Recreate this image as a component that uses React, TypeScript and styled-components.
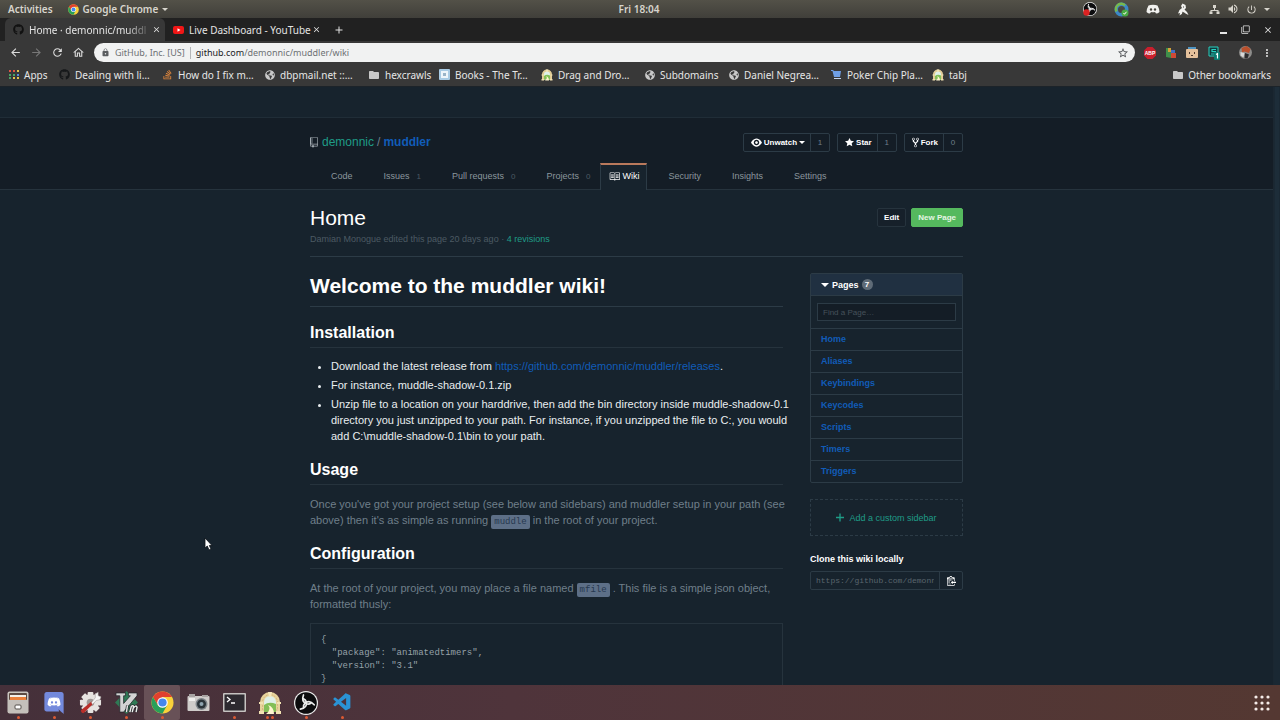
import React from "react";
import styled, { createGlobalStyle, css } from "styled-components";
import { FaGithub, FaStackOverflow, FaGlobeAmericas } from "react-icons/fa";
import {
  MdArrowBack,
  MdArrowForward,
  MdRefresh,
  MdOutlineHome,
  MdLock,
  MdStarBorder,
  MdFolder,
  MdMoreVert,
  MdClose,
  MdAdd,
  MdPowerSettingsNew,
  MdVolumeUp,
  MdFilterNone,
} from "react-icons/md";
import { VscVscode } from "react-icons/vsc";

const c = {
  page: "#17232d",
  header: "#141d26",
  line: "#26333d",
  rule: "#2c3b46",
  blue: "#115cb8",
  teal: "#1f9c87",
  muted: "#4c5a63",
  text: "#6f7f8a",
  light: "#e9eef0",
};

const uiFont = `"Noto Sans", "Open Sans", sans-serif`;
const pageFont = `"Liberation Sans", Arial, sans-serif`;
const monoFont = `"Liberation Mono", "Courier New", monospace`;

const GlobalStyle = createGlobalStyle`
  *, *::before, *::after { box-sizing: border-box; }
  body { margin: 0; background: ${c.page}; }
  button, input { font: inherit; color: inherit; }
  button { border: 0; padding: 0; background: none; }
  a { text-decoration: none; color: inherit; }
  ul, h1, h2, h3, p, pre { margin: 0; padding: 0; }
  svg { display: block; flex: none; }
`;

/* ---------- desktop shell ---------- */

const Desktop = styled.div`
  display: flex;
  flex-direction: column;
  height: 100vh;
  font-family: ${uiFont};
  overflow: hidden;
`;

const TopBar = styled.header`
  display: grid;
  grid-template-columns: 1fr auto 1fr;
  align-items: center;
  height: 18px;
  flex: none;
  padding: 0 10px 0 8px;
  background: linear-gradient(#535148, #403f3a);
  color: #d8d5cd;
  font-size: 10px;
  line-height: 18px;
  font-weight: 600;
`;

const TopGroup = styled.div<{ $end?: boolean; $gap: number }>`
  display: flex;
  align-items: center;
  gap: ${(p) => p.$gap}px;
  justify-content: ${(p) => (p.$end ? "flex-end" : "flex-start")};
`;

const TopButton = styled.button`
  display: flex;
  align-items: center;
  gap: 4px;
`;

const Caret = styled.span<{ $size?: number }>`
  border: ${(p) => p.$size ?? 3}px solid transparent;
  border-top-color: currentColor;
  border-bottom: 0;
`;

/* ---------- browser chrome ---------- */

const TabStrip = styled.div`
  display: flex;
  align-items: center;
  height: 23px;
  flex: none;
  padding: 0 7px 0 5px;
  background: #212121;
  color: #e4e4e4;
  font-size: 10px;
`;

const Tab = styled.div<{ $active?: boolean }>`
  display: flex;
  align-items: center;
  align-self: stretch;
  width: 160px;
  padding: 0 4px 0 8px;
  border-radius: 6px 6px 0 0;
  background: ${(p) => (p.$active ? "#383838" : "transparent")};
`;

const TabTitle = styled.span<{ $fade?: boolean }>`
  flex: 1;
  min-width: 0;
  padding-left: 5px;
  white-space: nowrap;
  ${(p) =>
    p.$fade &&
    css`
      mask-image: linear-gradient(90deg, #000 80%, transparent);
    `}
`;

const IconButton = styled.button`
  display: grid;
  place-items: center;
`;

const NewTab = styled(IconButton)`
  margin-left: 8px;
`;

const WindowButtons = styled.div`
  display: flex;
  align-items: center;
  gap: 13px;
  margin-left: auto;
`;

const Toolbar = styled.div`
  display: flex;
  align-items: center;
  gap: 8px;
  height: 23px;
  flex: none;
  padding: 0 7px 0 9px;
  background: #383838;
  color: #dcdcdc;
`;

const Address = styled.div`
  display: flex;
  align-items: center;
  flex: 1;
  height: 19px;
  margin-left: 1px;
  padding: 0 6px 0 7px;
  border-radius: 10px;
  background: #f1f2f2;
  color: #6d7174;
  font-size: 9px;
  line-height: 19px;
  white-space: nowrap;
`;

const SiteName = styled.span`
  margin: 0 5px;
  padding-right: 5px;
  border-right: 1px solid #b4b6b8;
  line-height: 12px;
`;

const Url = styled.span`
  flex: 1;
  b {
    font-weight: 400;
    color: #202124;
  }
`;

const Extensions = styled.div`
  display: flex;
  align-items: center;
  gap: 9px;
  margin-left: 1px;
`;

const Bookmarks = styled.nav`
  display: flex;
  height: 23px;
  flex: none;
  align-items: center;
  padding: 0 9px 1px 8px;
  border-bottom: 1px solid #1c2329;
  background: #383838;
  color: #e6e6e6;
  font-size: 10px;
`;

const Bookmark = styled.a<{ $width: number }>`
  display: flex;
  align-items: center;
  gap: 5px;
  width: ${(p) => p.$width}px;
  flex: none;
  white-space: nowrap;
`;

const OtherBookmarks = styled.a`
  display: flex;
  align-items: center;
  gap: 4px;
  margin-left: auto;
  white-space: nowrap;
`;

/* ---------- page ---------- */

const Viewport = styled.div`
  display: flex;
  flex: 1;
  min-height: 0;
  overflow: hidden;
  background: ${c.page};
  font-family: ${pageFont};
  color: ${c.text};
`;

const Page = styled.div`
  flex: 1;
  min-width: 0;
`;

const ScrollTrack = styled.div`
  width: 7px;
  background: #1a2833;
  border-left: 1px solid #1b2731;
`;

const Thumb = styled.div`
  height: 303px;
  margin: 0 1px;
  background: #1d2d39;
`;

const SiteBanner = styled.div`
  height: 31px;
  border-bottom: 1px solid #202d37;
`;

const Container = styled.div`
  width: 100%;
  max-width: 653px;
  margin: 0 auto;
`;

const RepoHead = styled.header`
  padding-top: 15px;
  border-bottom: 1px solid ${c.line};
  background: ${c.header};
`;

const RepoRow = styled.div`
  display: flex;
  align-items: center;
  justify-content: space-between;
  height: 19px;
`;

const RepoTitle = styled.h1`
  display: flex;
  align-items: center;
  gap: 3px;
  font-size: 12px;
  line-height: 19px;
  font-weight: 400;
  svg {
    margin-right: 1px;
  }
  a {
    color: ${c.teal};
  }
  a:last-child {
    color: ${c.blue};
    font-weight: 700;
  }
`;

const RepoActions = styled.div`
  display: flex;
  gap: 7px;
`;

const Social = styled.div`
  display: flex;
  height: 19px;
  border: 1px solid ${c.rule};
  border-radius: 2px;
  font-size: 8px;
  line-height: 17px;
`;

const SocialButton = styled.button`
  display: flex;
  align-items: center;
  gap: 2px;
  padding: 0 5px 0 7px;
  color: #fff;
  font-weight: 700;
`;

const SocialCount = styled.a`
  width: 19px;
  text-align: center;
  border-left: 1px solid ${c.rule};
  color: ${c.text};
`;

const RepoNav = styled.nav`
  display: flex;
  margin: 11px 0 -1px;
  font-size: 9px;
`;

const NavItem = styled.a<{ $active?: boolean }>`
  display: flex;
  align-items: center;
  height: 27px;
  padding: 0 10px 1px 21px;
  color: #8b969d;
  white-space: nowrap;
  ${(p) =>
    p.$active &&
    css`
      gap: 2px;
      padding: 0 7px 3px 8px;
      border: 1px solid ${c.rule};
      border-top: 2px solid #b9795c;
      border-bottom: 0;
      background: ${c.page};
      color: #fff;
    `}
`;

const Counter = styled.span`
  margin-left: 7px;
  color: ${c.muted};
  font-size: 8px;
`;

const Content = styled.main`
  padding-top: 18px;
`;

const TitleRow = styled.div`
  display: flex;
  align-items: center;
  gap: 5px;
  height: 19px;
`;

const PageTitle = styled.h1`
  flex: 1;
  color: #fff;
  font-size: 21px;
  line-height: 19px;
  font-weight: 400;
`;

const Button = styled.button<{ $primary?: boolean }>`
  height: 19px;
  padding: 0 6px;
  border: 1px solid ${(p) => (p.$primary ? "#55b95e" : c.line)};
  border-radius: 2px;
  background: ${(p) => (p.$primary ? "#55b95e" : "#16202a")};
  color: ${(p) => (p.$primary ? "#e4f5e4" : "#fff")};
  font-size: 8px;
  line-height: 17px;
  font-weight: 700;
`;

const Meta = styled.p`
  margin-top: 4px;
  padding-bottom: 9px;
  border-bottom: 1px solid ${c.rule};
  color: ${c.muted};
  font-size: 9px;
  line-height: 16px;
  a {
    color: ${c.teal};
  }
`;

const Columns = styled.div`
  display: grid;
  grid-template-columns: minmax(0, 1fr) 153px;
  gap: 27px;
  align-items: start;
  margin-top: 16px;
`;

const Article = styled.article`
  font-size: 11px;
  line-height: 16px;
  white-space: nowrap;
`;

const H1 = styled.h1`
  padding-bottom: 7px;
  border-bottom: 1px solid ${c.rule};
  color: #fff;
  font-size: 21px;
  line-height: 26px;
`;

const H2 = styled.h2`
  margin-top: 16px;
  padding-bottom: 4px;
  border-bottom: 1px solid ${c.line};
  color: #fff;
  font-size: 16px;
  line-height: 20px;
`;

const Steps = styled.ul`
  display: grid;
  gap: 3px;
  margin-top: 10px;
  padding-left: 21px;
  color: ${c.light};
  a {
    color: ${c.blue};
  }
`;

const Para = styled.p`
  margin-top: 11px;
`;

const Code = styled.code`
  padding: 2px 3px;
  border-radius: 2px;
  background: #5d6f87;
  color: #26384f;
  font-family: ${monoFont};
  font-size: 9px;
  line-height: 10px;
`;

const Pre = styled.pre`
  margin-top: 11px;
  padding: 10px;
  border: 1px solid ${c.line};
  color: #96a1a8;
  font-family: ${monoFont};
  font-size: 9px;
  line-height: 13px;
`;

const PagesBox = styled.section`
  border: 1px solid ${c.rule};
  border-radius: 2px;
  color: ${c.blue};
  font-size: 9px;
  font-weight: 700;
`;

const PagesHead = styled.h3`
  display: flex;
  align-items: center;
  gap: 3px;
  height: 21px;
  padding: 0 10px;
  background: #203041;
  color: #fff;
  font-size: 9px;
`;

const CountBadge = styled.span`
  width: 11px;
  border-radius: 6px;
  background: #5f6b77;
  font-size: 8px;
  line-height: 11px;
  text-align: center;
`;

const FilterRow = styled.div`
  padding: 7px 6px;
  border-top: 1px solid ${c.rule};
`;

const FilterInput = styled.input`
  display: block;
  width: 100%;
  height: 18px;
  padding: 0 5px;
  border: 1px solid ${c.rule};
  background: #141d26;
  font-size: 8px;
  font-weight: 400;
  &::placeholder {
    color: #46515a;
    opacity: 1;
  }
`;

const PageList = styled.ul`
  list-style: none;
`;

const PageItem = styled.li`
  height: 22px;
  padding: 0 10px;
  border-top: 1px solid ${c.rule};
  line-height: 21px;
`;

const AddSidebar = styled.a`
  display: flex;
  align-items: center;
  justify-content: center;
  gap: 5px;
  height: 37px;
  margin-top: 16px;
  border: 1px dashed ${c.rule};
  color: ${c.teal};
  font-size: 9px;
`;

const CloneLabel = styled.label`
  display: block;
  margin: 15px 0 4px;
  color: #fff;
  font-size: 9px;
  line-height: 16px;
  font-weight: 700;
`;

const CloneRow = styled.div`
  display: flex;
  height: 19px;
  border: 1px solid ${c.rule};
  border-radius: 2px;
`;

const CloneInput = styled.input`
  flex: 1;
  min-width: 0;
  padding: 0;
  border: 0;
  border-left: 5px solid transparent;
  border-right: 5px solid transparent;
  background: transparent;
  color: #5b666e;
  font-family: ${monoFont};
  font-size: 8px;
`;

const CopyButton = styled.button`
  display: grid;
  place-items: center;
  width: 23px;
  border-left: 1px solid ${c.rule};
  color: #fff;
`;

/* ---------- dock ---------- */

const Dock = styled.footer`
  display: flex;
  align-items: stretch;
  justify-content: space-between;
  height: 35px;
  flex: none;
  padding-right: 10px;
  background: linear-gradient(90deg, #45303a, #4f343b 40%, #543832);
`;

const DockApps = styled.div`
  display: flex;
`;

const DockButton = styled.button<{ $active?: boolean }>`
  position: relative;
  display: grid;
  place-items: center;
  width: 36px;
  border-radius: 2px;
  background: ${(p) => (p.$active ? "#685157" : "transparent")};
`;

const Running = styled.span`
  position: absolute;
  left: 0;
  right: 0;
  bottom: 1px;
  display: flex;
  justify-content: center;
  gap: 2px;
  i {
    width: 3px;
    height: 3px;
    border-radius: 2px;
    background: #dd5a33;
  }
`;

const Pointer = styled.svg`
  position: absolute;
  left: 204px;
  top: 537px;
`;

/* ---------- drawings ---------- */

const oct = {
  repo: [12, "M4 9H3V8h1v1zm0-3H3v1h1V6zm0-2H3v1h1V4zm0-2H3v1h1V2zm8-1v12c0 .55-.45 1-1 1H6v2l-1.5-1.5L3 16v-2H1c-.55 0-1-.45-1-1V1c0-.55.45-1 1-1h10c.55 0 1 .45 1 1zm-1 10H1v2h2v-1h3v1h5v-2zm0-10H2v9h9V1z"],
  eye: [16, "M8.06 2C3 2 0 8 0 8s3 6 8.06 6C13 14 16 8 16 8s-3-6-7.94-6zM8 12c-2.2 0-4-1.78-4-4 0-2.2 1.8-4 4-4 2.22 0 4 1.8 4 4 0 2.22-1.78 4-4 4zm2-4c0 1.11-.89 2-2 2-1.11 0-2-.89-2-2 0-1.11.89-2 2-2 1.11 0 2 .89 2 2z"],
  star: [14, "M14 6l-4.9-.64L7 1 4.9 5.36 0 6l3.6 3.26L2.67 14 7 11.67 11.33 14l-.93-4.74L14 6z"],
  fork: [10, "M8 1a1.993 1.993 0 0 0-1 3.72V6L5 8 3 6V4.72A1.993 1.993 0 0 0 2 1a1.993 1.993 0 0 0-1 3.72V6.5l3 3v1.78A1.993 1.993 0 0 0 5 15a1.993 1.993 0 0 0 1-3.72V9.5l3-3V4.72A1.993 1.993 0 0 0 8 1zM2 4.2C1.34 4.2.8 3.65.8 3c0-.65.55-1.2 1.2-1.2.65 0 1.2.55 1.2 1.2 0 .65-.55 1.2-1.2 1.2zm3 10c-.66 0-1.2-.55-1.2-1.2 0-.65.55-1.2 1.2-1.2.65 0 1.2.55 1.2 1.2 0 .65-.55 1.2-1.2 1.2zm3-10c-.66 0-1.2-.55-1.2-1.2 0-.65.55-1.2 1.2-1.2.65 0 1.2.55 1.2 1.2 0 .65-.55 1.2-1.2 1.2z"],
  book: [16, "M3 5h4v1H3V5zm0 3h4V7H3v1zm0 2h4V9H3v1zm11-5h-4v1h4V5zm0 2h-4v1h4V7zm0 2h-4v1h4V9zm2-6v9c0 .55-.45 1-1 1H9.5l-1 1-1-1H2c-.55 0-1-.45-1-1V3c0-.55.45-1 1-1h5.5l1 1 1-1H15c.55 0 1 .45 1 1zm-8 .5L7.5 3H2v9h6V3.5zm7-.5H9.5l-.5.5V12h6V3z"],
  plus: [12, "M12 9H7v5H5V9H0V7h5V2h2v5h5v2z"],
  clippy: [14, "M2 13h4v1H2v-1zm5-6H2v1h5V7zm2 3V8l-3 3 3 3v-2h5v-2H9zM4.5 9H2v1h2.5V9zM2 12h2.5v-1H2v1zm9 1h1v2c-.02.28-.11.52-.3.7-.19.18-.42.28-.7.3H1c-.55 0-1-.45-1-1V4c0-.55.45-1 1-1h3c0-1.11.89-2 2-2 1.11 0 2 .89 2 2h3c.55 0 1 .45 1 1v5h-1V6H1v9h10v-2zM2 5h8c0-.55-.45-1-1-1H8c-.55 0-1-.45-1-1s-.45-1-1-1-1 .45-1 1-.45 1-1 1H3c-.55 0-1 .45-1 1z"],
} as const;

const Octicon = ({ name, width, height, fill = "currentColor" }: { name: keyof typeof oct; width: number; height: number; fill?: string }) => (
  <svg width={width} height={height} viewBox={`0 0 ${oct[name][0]} 16`} fill={fill} aria-hidden="true">
    <path d={oct[name][1]} />
  </svg>
);

const ChromeLogo = ({ size }: { size: number }) => (
  <svg width={size} height={size} viewBox="0 0 48 48" aria-hidden="true">
    <circle cx="24" cy="24" r="23" fill="#f9d13a" />
    <path d="M4.1 12.5A23 23 0 0 1 43.9 12.5H24L14.5 29.5z" fill="#e0402f" />
    <path d="M4.1 12.5A23 23 0 0 0 24 47L33.5 29.5 24 34 14.5 29.5z" fill="#28a05a" />
    <circle cx="24" cy="24" r="11" fill="#fff" />
    <circle cx="24" cy="24" r="8.6" fill="#4587ec" />
  </svg>
);

const YouTube = () => (
  <svg width="11" height="8" viewBox="0 0 22 16" aria-hidden="true">
    <rect width="22" height="16" rx="4" fill="#f01616" />
    <path d="M9 4.5v7l6-3.5z" fill="#fff" />
  </svg>
);

const AppsGrid = () => (
  <svg width="11" height="11" viewBox="0 0 11 11" aria-hidden="true">
    {["#e25544", "#e25544", "#e4c34c", "#49a566", "#49a566", "#5a8bd8", "#49a566", "#e4c34c", "#e4c34c"].map((f, i) => (
      <rect key={i} x={1 + (i % 3) * 4} y={1 + Math.floor(i / 3) * 4 - (i > 5 ? 1 : 0)} width="2" height="2" fill={f} />
    ))}
  </svg>
);

const Arch = ({ size }: { size: number }) => (
  <svg width={size} height={size} viewBox="0 0 24 24" aria-hidden="true">
    <path d="M2 21V11a10 10 0 0 1 20 0v10z" fill="#e7d39c" />
    <path d="M4.6 19v-8a7.4 7.4 0 0 1 14.8 0v8z" fill="none" stroke="#c4a468" strokeWidth="0.6" strokeDasharray="2 1" />
    <path d="M6 21V11a6 6 0 0 1 12 0v10z" fill="#dff0e8" />
    <path d="M6 21v-7q5-4 12-1v8z" fill="#83bf57" />
    <path d="M8 23q6-5 2-9 6 2 6 9z" fill="#fff6cf" />
    <path d="M1 20h5v3H1zM18 20h5v3h-5zM1 11h4v2H1zM19 11h4v2h-4z" fill="#f2e2b2" />
    <path d="M10 1h4l-1 5h-2z" fill="#f5e8bd" />
  </svg>
);

const Frame = () => (
  <svg width="11" height="11" viewBox="0 0 11 11" aria-hidden="true">
    <rect width="11" height="11" rx="1" fill="#a9cbe4" />
    <rect x="2" y="2" width="7" height="7" fill="#eef5fa" />
    <rect x="4" y="4" width="3" height="3" fill="#9ab4c8" />
  </svg>
);

const Cart = () => (
  <svg width="11" height="11" viewBox="0 0 11 11" aria-hidden="true">
    <path d="M0 1h2l1 1h7l-1 6H3L1.500 2H0z" fill="#6f9fe6" />
    <path d="M3 9h7v1H3z" fill="#c3d4ee" />
  </svg>
);

const DISCORD =
  "M297.216 243.2c0 15.616-11.52 28.416-26.112 28.416-14.336 0-26.112-12.8-26.112-28.416s11.52-28.416 26.112-28.416c14.592 0 26.112 12.8 26.112 28.416zm-119.552-28.416c-14.592 0-26.112 12.8-26.112 28.416s11.776 28.416 26.112 28.416c14.592 0 26.112-12.8 26.112-28.416.256-15.616-11.52-28.416-26.112-28.416zM448 52.736V512c-64.494-56.994-43.868-38.128-118.784-107.776l13.568 47.36H52.48C23.552 451.584 0 428.032 0 398.848V52.736C0 23.552 23.552 0 52.48 0h343.04C424.448 0 448 23.552 448 52.736zm-72.96 242.688c0-82.432-36.864-149.248-36.864-149.248-36.864-27.648-71.936-26.88-71.936-26.88l-3.584 4.096c43.52 13.312 63.744 32.512 63.744 32.512-60.811-33.329-132.244-33.335-191.232-7.424-9.472 4.352-15.104 7.424-15.104 7.424s21.248-20.224 67.328-33.536l-2.56-3.072s-35.072-.768-71.936 26.88c0 0-36.864 66.816-36.864 149.248 0 0 21.504 37.12 78.08 38.912 0 0 9.472-11.52 17.152-21.248-32.512-9.728-44.8-30.208-44.8-30.208 3.766 2.636 9.976 6.053 10.496 6.4 43.21 24.198 104.588 32.126 159.744 8.96 8.96-3.328 18.944-8.192 29.44-15.104 0 0-12.8 20.992-46.336 30.464 7.68 9.728 16.896 20.736 16.896 20.736 56.576-1.792 78.336-38.912 78.336-38.912z";

const DiscordApp = () => (
  <svg width="20" height="22" viewBox="0 0 448 512" aria-hidden="true">
    <rect x="60" y="90" width="330" height="260" fill="#fff" />
    <path d={DISCORD} fill="#7389dc" />
  </svg>
);

const DiscordTray = () => (
  <svg width="14" height="12" viewBox="0 0 28 24" aria-hidden="true">
    <path d="M9 4q5-1.500 10 0l4 1q4 7 4 13-3 3-7 3l-2-3q-4 1-8 0l-2 3q-4 0-7-3 0-6 4-13z" fill="#f1f1ee" />
    <ellipse cx="10" cy="13" rx="2.300" ry="2.600" fill="#48463f" />
    <ellipse cx="18" cy="13" rx="2.300" ry="2.600" fill="#48463f" />
  </svg>
);

const ObsLogo = ({ size, recording }: { size: number; recording?: boolean }) => (
  <svg width={size} height={size} viewBox="0 0 24 24" aria-hidden="true">
    <circle cx="12" cy="12" r="12" fill="#ececec" />
    <circle cx="12" cy="12" r="10.800" fill="#0c0c0e" />
    <g fill="none" stroke="#ececec" strokeWidth="1.700" strokeLinecap="round">
      {[0, 120, 240].map((a) => (
        <path key={a} d="M9.500 4Q7 10.500 12.500 12.800Q15 13.500 17 12" transform={`rotate(${a} 12 12)`} />
      ))}
    </g>
    {recording && <circle cx="6" cy="18" r="5.500" fill="#dc2222" />}
  </svg>
);

const SyncTray = () => (
  <svg width="15" height="15" viewBox="0 0 30 30" aria-hidden="true">
    <circle cx="15" cy="15" r="10.500" fill="none" stroke="#3b88c8" strokeWidth="7" />
    <path d="M22 7A10.500 10.500 0 0 0 5 19" fill="none" stroke="#79b94b" strokeWidth="5" />
    <circle cx="22" cy="22" r="7" fill="#48a942" />
    <path d="M19 22l2 2.500 4-5" fill="none" stroke="#fff" strokeWidth="2" />
  </svg>
);

const SquirrelTray = () => (
  <svg width="12" height="13" viewBox="0 0 24 26" aria-hidden="true">
    <path d="M11 1l6 3 1 6-3 3 5 5 3 6-6-3-4-3-2 3-6 4 1-5-4 1 3-7 5-4-2-4z" fill="#f1f1ee" />
    <path d="M12 7h2v2h-2zM11 17l4 5h-5z" fill="#48463f" />
  </svg>
);

const NetworkTray = () => (
  <svg width="11" height="11" viewBox="0 0 22 22" fill="#d8d5cd" aria-hidden="true">
    <path d="M8 2h6v6h-2v4h7v3h2v5h-6v-5h2v-1H5v1h2v5H1v-5h2v-3h7V8H8z" />
  </svg>
);

const Abp = () => (
  <svg width="12" height="12" viewBox="0 0 24 24" aria-hidden="true">
    <path d="M7 0h10l7 7v10l-7 7H7l-7-7V7z" fill="#c91f2d" />
    <text x="12" y="15.500" fontSize="10" fontWeight="700" textAnchor="middle" fill="#fff" fontFamily="Liberation Sans, sans-serif">
      ABP
    </text>
  </svg>
);

const Blocks = () => (
  <svg width="12" height="12" viewBox="0 0 12 12" aria-hidden="true">
    <path d="M1 1h5v10l-5-1z" fill="#3f8f4a" />
    <path d="M3 1h3v4H3z" fill="#d3a13a" />
    <path d="M6 3h4v4H6z" fill="#3f6fc4" />
    <path d="M6 6h5v5H6z" fill="#cf4a35" />
  </svg>
);

const Face = () => (
  <svg width="12" height="12" viewBox="0 0 12 12" aria-hidden="true">
    <path d="M2 0h8v4H2z" fill="#4f94c2" />
    <rect y="2" width="12" height="9" rx="1" fill="#e5c19c" />
    <path d="M3 5h1v2H3zM8 5h1v2H8zM5 8h2v1H5z" fill="#4f3a30" />
  </svg>
);

const Stylus = () => (
  <svg width="14" height="14" viewBox="0 0 14 14" aria-hidden="true">
    <path d="M2 1h9v9H2V4z" fill="#12383a" stroke="#27d0c0" />
    <path d="M9 3.500H5v2.200h3.500v2.300H4" fill="none" stroke="#27d0c0" strokeWidth="1.200" />
    <rect x="7" y="6" width="6" height="8" rx="1" fill="#0a7a70" />
    <path d="M9 8.500l1.500-1v5" fill="none" stroke="#fff" strokeWidth="1.200" />
  </svg>
);

const Avatar = () => (
  <svg width="13" height="13" viewBox="0 0 26 26" aria-hidden="true">
    <circle cx="13" cy="13" r="13" fill="#8d8c8a" />
    <path d="M5 4l10-4 8 6-3 8-9-3-5 2z" fill="#b9502d" />
    <path d="M3 12l8 2-2 9-6-4z" fill="#d8d8d8" />
    <path d="M12 14l8 3-3 8h-6z" fill="#2c2b2d" />
  </svg>
);

const MinimizeGlyph = () => (
  <svg width="8" height="8" viewBox="0 0 8 8" fill="currentColor" aria-hidden="true">
    <rect y="6" width="7" height="2" />
  </svg>
);

const FilesApp = () => (
  <svg width="22" height="23" viewBox="0 0 22 23" aria-hidden="true">
    <rect x="0.500" y="0.500" width="21" height="22" rx="2" fill="#c9c5bf" />
    <rect x="2" y="2" width="18" height="7" rx="1" fill="#5c4a42" />
    <path d="M3 4h16v2H3z" fill="#f3efe8" />
    <path d="M3 6h16v3H3z" fill="#e9803b" />
    <rect x="1" y="9" width="20" height="13" rx="1" fill="#c4c0bb" />
    <rect x="8" y="14" width="6" height="4" rx="1" fill="#fff" stroke="#55504c" />
  </svg>
);

const SettingsApp = () => (
  <svg width="23" height="23" viewBox="0 0 24 24" aria-hidden="true">
    <g fill="#e6e3e0">
      {[0, 45, 90, 135].map((a) => (
        <rect key={a} x="9" y="1" width="6" height="22" rx="1" transform={`rotate(${a} 12 12)`} />
      ))}
      <circle cx="12" cy="12" r="8.500" />
    </g>
    <circle cx="12" cy="12" r="4" fill="#9d9895" />
    <path d="M2 20l11-9 2 2-10 10q-3 0-3-3z" fill="#b92f2a" />
    <path d="M13 12l4-5V3l3-2v4l3 1-1 3-4 1-4 4z" fill="#f5f5f5" stroke="#98908d" strokeWidth="0.500" />
  </svg>
);

const VimApp = () => (
  <svg width="23" height="23" viewBox="0 0 24 24" aria-hidden="true">
    <path d="M12 0l12 12-12 12L0 12z" fill="#2f7a55" />
    <path d="M1 2h10v3H9v8l7-8h-2V2h9v3L9 22H5V5H1z" fill="#d4d4d4" stroke="#22262a" strokeWidth="0.800" />
    <path d="M13 15l-1 7M15.500 22l1.500-6q3-2 2 2l-1 4 1-4q3-4 4-1l-1 5" fill="none" stroke="#24282b" strokeWidth="3" />
    <path d="M13 15l-1 7M15.500 22l1.500-6q3-2 2 2l-1 4 1-4q3-4 4-1l-1 5" fill="none" stroke="#ececec" strokeWidth="1.500" />
  </svg>
);

const CameraApp = () => (
  <svg width="23" height="18" viewBox="0 0 23 18" aria-hidden="true">
    <rect x="0.500" y="2" width="22" height="15" rx="1" fill="#cfccca" />
    <path d="M2 0h6v3H2zM15 1h6v2h-6z" fill="#a8a4a3" />
    <rect x="2" y="4" width="6" height="3" fill="#efeeec" />
    <circle cx="14.500" cy="10" r="6" fill="#7e8489" />
    <circle cx="14.500" cy="10" r="4.500" fill="#2b3339" />
    <circle cx="14.500" cy="10" r="2" fill="#8fa4b0" />
  </svg>
);

const TerminalApp = () => (
  <svg width="23" height="19" viewBox="0 0 23 19" aria-hidden="true">
    <rect width="23" height="19" rx="1" fill="#c6c3c1" />
    <rect x="1.500" y="1.500" width="20" height="16" fill="#2d2a30" />
    <path d="M4 4l3 2.500L4 9M8 10h4" fill="none" stroke="#fff" strokeWidth="1.300" />
  </svg>
);

const DotsGrid = () => (
  <svg width="16" height="16" viewBox="0 0 16 16" fill="#f5ebe8" aria-hidden="true">
    {[2, 8, 14].map((y) => [2, 8, 14].map((x) => <circle key={`${x}-${y}`} cx={x} cy={y} r="1.600" />))}
  </svg>
);

/* ---------- data ---------- */

const globe = <FaGlobeAmericas size={10} color="#c9c9c9" />;
const bookmarks: { icon: React.ReactNode; label: string; width: number }[] = [
  { icon: <AppsGrid />, label: "Apps", width: 51 },
  { icon: <FaGithub size={11} color="#16181a" />, label: "Dealing with li…", width: 103 },
  { icon: <FaStackOverflow size={11} color="#e0863c" />, label: "How do I fix m…", width: 103 },
  { icon: globe, label: "dbpmail.net ::…", width: 103 },
  { icon: <MdFolder size={12} color="#c9c9c9" />, label: "hexcrawls", width: 71 },
  { icon: <Frame />, label: "Books - The Tr…", width: 102 },
  { icon: <Arch size={12} />, label: "Drag and Dro…", width: 104 },
  { icon: globe, label: "Subdomains", width: 84 },
  { icon: globe, label: "Daniel Negrea…", width: 102 },
  { icon: <Cart />, label: "Poker Chip Pla…", width: 101 },
  { icon: <Arch size={12} />, label: "tabj", width: 40 },
];

const navItems: { label: string; count?: number; active?: boolean }[] = [
  { label: "Code" },
  { label: "Issues", count: 1 },
  { label: "Pull requests", count: 0 },
  { label: "Projects", count: 0 },
  { label: "Wiki", active: true },
  { label: "Security" },
  { label: "Insights" },
  { label: "Settings" },
];

const wikiPages = ["Home", "Aliases", "Keybindings", "Keycodes", "Scripts", "Timers", "Triggers"];

const dockApps: { name: string; icon: React.ReactNode; running: number; active?: boolean }[] = [
  { name: "Files", icon: <FilesApp />, running: 1 },
  { name: "Discord", icon: <DiscordApp />, running: 1 },
  { name: "Settings", icon: <SettingsApp />, running: 1 },
  { name: "Vim", icon: <VimApp />, running: 1 },
  { name: "Chrome", icon: <ChromeLogo size={23} />, running: 1, active: true },
  { name: "Camera", icon: <CameraApp />, running: 0 },
  { name: "Terminal", icon: <TerminalApp />, running: 1 },
  { name: "Mudlet", icon: <Arch size={24} />, running: 2 },
  { name: "OBS", icon: <ObsLogo size={24} />, running: 1 },
  { name: "Code", icon: <VscVscode size={21} color="#2a93d5" />, running: 1 },
];

/* ---------- app ---------- */

export default function App() {
  return (
    <Desktop>
      <GlobalStyle />
      <TopBar>
        <TopGroup $gap={15}>
          <TopButton>Activities</TopButton>
          <TopButton>
            <ChromeLogo size={11} />
            Google Chrome
            <Caret />
          </TopButton>
        </TopGroup>
        <span>Fri 18:04</span>
        <TopGroup $end $gap={13}>
          <TopGroup $gap={17}>
            <ObsLogo size={14} recording />
            <SyncTray />
            <DiscordTray />
            <SquirrelTray />
          </TopGroup>
          <TopGroup $gap={7}>
            <span />
            <NetworkTray />
            <MdVolumeUp size={12} />
            <MdPowerSettingsNew size={11} />
            <Caret />
          </TopGroup>
        </TopGroup>
      </TopBar>

      <TabStrip>
        <Tab $active>
          <FaGithub size={11} color="#111" />
          <TabTitle $fade>Home · demonnic/muddl</TabTitle>
          <IconButton aria-label="Close tab">
            <MdClose size={9} />
          </IconButton>
        </Tab>
        <Tab>
          <YouTube />
          <TabTitle>Live Dashboard - YouTube</TabTitle>
          <IconButton aria-label="Close tab">
            <MdClose size={9} />
          </IconButton>
        </Tab>
        <NewTab aria-label="New tab">
          <MdAdd size={12} />
        </NewTab>
        <WindowButtons>
          <IconButton aria-label="Minimize">
            <MinimizeGlyph />
          </IconButton>
          <IconButton aria-label="Restore">
            <MdFilterNone size={9} />
          </IconButton>
          <IconButton aria-label="Close">
            <MdClose size={10} />
          </IconButton>
        </WindowButtons>
      </TabStrip>

      <Toolbar>
        <IconButton aria-label="Back">
          <MdArrowBack size={13} />
        </IconButton>
        <IconButton aria-label="Forward">
          <MdArrowForward size={13} color="#777" />
        </IconButton>
        <IconButton aria-label="Reload">
          <MdRefresh size={13} />
        </IconButton>
        <IconButton aria-label="Home">
          <MdOutlineHome size={13} />
        </IconButton>
        <Address>
          <MdLock size={9} color="#5a5d60" />
          <SiteName>GitHub, Inc. [US]</SiteName>
          <Url>
            <b>github.com</b>/demonnic/muddler/wiki
          </Url>
          <MdStarBorder size={12} color="#4d5053" />
        </Address>
        <Extensions>
          <Abp />
          <Blocks />
          <Face />
          <Stylus />
        </Extensions>
        <Extensions>
          <span />
          <Avatar />
          <IconButton aria-label="Menu">
            <MdMoreVert size={12} />
          </IconButton>
        </Extensions>
      </Toolbar>

      <Bookmarks>
        {bookmarks.map((b) => (
          <Bookmark key={b.label} href="#" $width={b.width}>
            {b.icon}
            {b.label}
          </Bookmark>
        ))}
        <OtherBookmarks href="#">
          <MdFolder size={12} color="#c9c9c9" />
          Other bookmarks
        </OtherBookmarks>
      </Bookmarks>

      <Viewport>
        <Page>
          <SiteBanner />
          <RepoHead>
            <Container>
              <RepoRow>
                <RepoTitle>
                  <Octicon name="repo" width={8} height={11} fill="#a3acb2" />
                  <a href="#">demonnic</a>
                  <span>/</span>
                  <a href="#">muddler</a>
                </RepoTitle>
                <RepoActions>
                  <Social>
                    <SocialButton>
                      <Octicon name="eye" width={11} height={11} />
                      Unwatch
                      <Caret />
                    </SocialButton>
                    <SocialCount href="#">1</SocialCount>
                  </Social>
                  <Social>
                    <SocialButton>
                      <Octicon name="star" width={9} height={11} />
                      Star
                    </SocialButton>
                    <SocialCount href="#">1</SocialCount>
                  </Social>
                  <Social>
                    <SocialButton>
                      <Octicon name="fork" width={7} height={11} />
                      Fork
                    </SocialButton>
                    <SocialCount href="#">0</SocialCount>
                  </Social>
                </RepoActions>
              </RepoRow>
              <RepoNav>
                {navItems.map((n) => (
                  <NavItem key={n.label} href="#" $active={n.active}>
                    {n.active && <Octicon name="book" width={11} height={11} />}
                    {n.label}
                    {n.count !== undefined && <Counter>{n.count}</Counter>}
                  </NavItem>
                ))}
              </RepoNav>
            </Container>
          </RepoHead>

          <Container>
            <Content>
              <TitleRow>
                <PageTitle>Home</PageTitle>
                <Button>Edit</Button>
                <Button $primary>New Page</Button>
              </TitleRow>
              <Meta>
                Damian Monogue edited this page 20 days ago · <a href="#">4 revisions</a>
              </Meta>

              <Columns>
                <Article>
                  <H1>Welcome to the muddler wiki!</H1>
                  <H2>Installation</H2>
                  <Steps>
                    <li>
                      Download the latest release from <a href="#">https://github.com/demonnic/muddler/releases</a>.
                    </li>
                    <li>For instance, muddle-shadow-0.1.zip</li>
                    <li>
                      Unzip file to a location on your harddrive, then add the bin directory inside muddle-shadow-0.1
                      <br />
                      directory you just unzipped to your path. For instance, if you unzipped the file to C:, you would
                      <br />
                      add C:\muddle-shadow-0.1\bin to your path.
                    </li>
                  </Steps>
                  <H2>Usage</H2>
                  <Para>
                    Once you've got your project setup (see below and sidebars) and muddler setup in your path (see
                    <br />
                    above) then it's as simple as running <Code>muddle</Code> in the root of your project.
                  </Para>
                  <H2>Configuration</H2>
                  <Para>
                    At the root of your project, you may place a file named <Code>mfile</Code> . This file is a simple json object,
                    <br />
                    formatted thusly:
                  </Para>
                  <Pre>{`{
  "package": "animatedtimers",
  "version": "3.1"
}`}</Pre>
                </Article>

                <aside>
                  <PagesBox>
                    <PagesHead>
                      <Caret $size={4} />
                      Pages
                      <CountBadge>7</CountBadge>
                    </PagesHead>
                    <FilterRow>
                      <FilterInput aria-label="Find a page" placeholder="Find a Page…" />
                    </FilterRow>
                    <PageList>
                      {wikiPages.map((p) => (
                        <PageItem key={p}>
                          <a href="#">{p}</a>
                        </PageItem>
                      ))}
                    </PageList>
                  </PagesBox>
                  <AddSidebar href="#">
                    <Octicon name="plus" width={8} height={11} />
                    Add a custom sidebar
                  </AddSidebar>
                  <CloneLabel htmlFor="clone-url">Clone this wiki locally</CloneLabel>
                  <CloneRow>
                    <CloneInput id="clone-url" readOnly value="https://github.com/demonnic/muddler.wiki.git" />
                    <CopyButton aria-label="Copy clone URL">
                      <Octicon name="clippy" width={9} height={11} />
                    </CopyButton>
                  </CloneRow>
                </aside>
              </Columns>
            </Content>
          </Container>
        </Page>
        <ScrollTrack>
          <Thumb />
        </ScrollTrack>
      </Viewport>

      <Dock>
        <DockApps>
          {dockApps.map((a) => (
            <DockButton key={a.name} aria-label={a.name} $active={a.active}>
              {a.icon}
              <Running>
                {Array.from({ length: a.running }, (_, i) => (
                  <i key={i} />
                ))}
              </Running>
            </DockButton>
          ))}
        </DockApps>
        <IconButton aria-label="Show applications">
          <DotsGrid />
        </IconButton>
      </Dock>

      <Pointer width="9" height="14" viewBox="0 0 9 14" aria-hidden="true">
        <path d="M1 1v10l2.300-2 1.700 4 2-1-1.700-3.500H8z" fill="#fff" stroke="#0c1218" strokeWidth="0.800" />
      </Pointer>
    </Desktop>
  );
}
